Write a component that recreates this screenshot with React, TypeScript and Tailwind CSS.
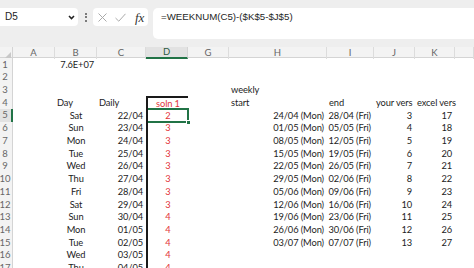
import React from "react";

const COLS =
  "grid grid-cols-[13px_42px_42px_49px_42px_41px_98px_47px_41px_40px_19px] h-[12.73px]";

const days = ["Sat","Sun","Mon","Tue","Wed","Thu","Fri","Sat","Sun","Mon","Tue","Wed","Thu"];
const dates = ["22/04","23/04","24/04","25/04","26/04","27/04","28/04","29/04","30/04","01/05","02/05","03/05","04/05"];
const soln = ["2","3","3","3","3","3","3","3","4","4","4","4","4"];
const weeks: [string, string, string, string][] = [
  ["24/04 (Mon)", "28/04 (Fri)", "3", "17"],
  ["01/05 (Mon)", "05/05 (Fri)", "4", "18"],
  ["08/05 (Mon)", "12/05 (Fri)", "5", "19"],
  ["15/05 (Mon)", "19/05 (Fri)", "6", "20"],
  ["22/05 (Mon)", "26/05 (Fri)", "7", "21"],
  ["29/05 (Mon)", "02/06 (Fri)", "8", "22"],
  ["05/06 (Mon)", "09/06 (Fri)", "9", "23"],
  ["12/06 (Mon)", "16/06 (Fri)", "10", "24"],
  ["19/06 (Mon)", "23/06 (Fri)", "11", "25"],
  ["26/06 (Mon)", "30/06 (Fri)", "12", "26"],
  ["03/07 (Mon)", "07/07 (Fri)", "13", "27"],
];

function L({ children }: { children?: React.ReactNode }) {
  return <div className="flex items-center pl-[2px] whitespace-nowrap overflow-visible">{children}</div>;
}
function R({ children }: { children?: React.ReactNode }) {
  return <div className="flex items-center justify-end pr-[3px] whitespace-nowrap">{children}</div>;
}
function C({ children }: { children?: React.ReactNode }) {
  return <div className="flex items-center justify-center whitespace-nowrap">{children}</div>;
}

function RowHead({ n, active }: { n: number; active?: boolean }) {
  return (
    <div
      className={
        "flex items-center overflow-hidden text-[#666] text-[9.5px] border-r " +
        (active ? "bg-[#e2e2e2] border-r-2 border-[#217346]" : "bg-[#f3f3f3] border-[#d4d4d4]")
      }
    >
      <div className="w-[12px] -ml-[1px] shrink-0 text-center">{n}</div>
    </div>
  );
}

function DCell({ n, children }: { n: number; children?: React.ReactNode }) {
  if (n < 4) return <div />;
  return (
    <div
      className={
        "relative flex items-center justify-center text-[#e3343a] border-l-2 border-[#1a1a1a] " +
        (n === 4 ? "border-t-2" : "")
      }
    >
      {children}
      {n === 5 && (
        <div className="absolute -top-[1px] -bottom-[1px] left-0 -right-[1px] border-2 border-l-0 border-[#217346]">
          <div className="absolute -right-[4px] -bottom-[4px] w-[5px] h-[5px] bg-[#217346] border border-white" />
        </div>
      )}
    </div>
  );
}

export default function App() {
  const headers = ["A", "B", "C", "D", "G", "H", "I", "J", "K", ""];
  return (
    <div className="w-[474px] h-[268px] overflow-hidden bg-white text-[#1c1c1c] font-['Lato',sans-serif] text-[9.3px] tracking-[-0.1px] leading-none">
      {/* Formula bar */}
      <div className="h-[47px] bg-[#eeeeee] flex items-start pt-[8px] font-['Liberation_Sans',sans-serif] tracking-normal">
        <div className="w-[78px] h-[18px] bg-white rounded-r-[4px] flex items-center justify-between pl-[5px] pr-[3px]">
          <span className="text-[10px] text-[#222]">D5</span>
          <svg width="7" height="5" viewBox="0 0 7 5">
            <path d="M1 1 L3.5 3.6 L6 1" fill="none" stroke="#222" strokeWidth="1.5" />
          </svg>
        </div>
        <div className="w-[15px] h-[18px] flex flex-col items-center justify-center gap-[1.5px]">
          <div className="w-[2px] h-[2px] bg-[#555] rounded-full" />
          <div className="w-[2px] h-[2px] bg-[#555] rounded-full" />
          <div className="w-[2px] h-[2px] bg-[#555] rounded-full" />
        </div>
        <div className="w-[55px] h-[18px] bg-white rounded-[4px] flex items-center pl-[5px]">
          <svg width="9" height="9" viewBox="0 0 9 9">
            <path d="M0.5 0.5 L8.5 8.5 M8.5 0.5 L0.5 8.5" stroke="#aaa" strokeWidth="1" />
          </svg>
          <svg width="11" height="9" viewBox="0 0 11 9" className="ml-[8px]">
            <path d="M0.5 5 L3.8 8.2 L10.5 0.8" fill="none" stroke="#aaa" strokeWidth="1" />
          </svg>
          <span className="ml-[9px] font-['Liberation_Serif',serif] italic text-[13px] text-[#333] leading-none">
            fx
          </span>
        </div>
        <div className="ml-[5px] flex-1 h-[31px] bg-white rounded-l-[5px] pl-[8px] pt-[4px] text-[9.7px] text-[#1e1e1e]">
          =WEEKNUM(C5)-($K$5-$J$5)
        </div>
      </div>

      {/* Column headers */}
      <div className="grid grid-cols-[13px_42px_42px_49px_42px_41px_98px_47px_41px_40px_19px] h-[11px] bg-[#f3f3f3] border-b border-[#d4d4d4] text-[#666] text-[9.5px] tracking-normal">
        <div className="flex items-end justify-end border-r border-[#d4d4d4] pr-[1px] pb-[1px]">
          <svg width="6" height="6" viewBox="0 0 6 6">
            <path d="M6 0 L6 6 L0 6 Z" fill="#c8c8c8" />
          </svg>
        </div>
        {headers.map((h, i) => (
          <div
            key={i}
            className={
              "flex items-center justify-center border-r " +
              (h === "D"
                ? "bg-[#e2e2e2] border-[#d4d4d4] border-b-2 border-b-[#217346] text-[#2d5a3f]"
                : "border-[#dcdcdc]")
            }
          >
            {h}
          </div>
        ))}
      </div>

      {/* Rows */}
      {Array.from({ length: 17 }, (_, idx) => {
        const n = idx + 1;
        const d = n >= 5 ? n - 5 : -1;
        const w = n >= 5 && n <= 15 ? weeks[n - 5] : null;
        return (
          <div key={n} className={COLS}>
            <RowHead n={n} active={n === 5} />
            <div />
            {n === 1 ? <R>7.6E+07</R> : n === 4 ? <L>Day</L> : d >= 0 ? <C>{days[d]}</C> : <div />}
            {n === 4 ? <L>Daily</L> : d >= 0 ? <R>{dates[d]}</R> : <div />}
            <DCell n={n}>{n === 4 ? "soln 1" : d >= 0 ? soln[d] : null}</DCell>
            <div />
            {n === 3 ? <L>weekly</L> : n === 4 ? <L>start</L> : w ? <R>{w[0]}</R> : <div />}
            {n === 4 ? <L>end</L> : w ? <R>{w[1]}</R> : <div />}
            {n === 4 ? <L>your vers</L> : w ? <R>{w[2]}</R> : <div />}
            {n === 4 ? <L>excel vers</L> : w ? <R>{w[3]}</R> : <div />}
            <div />
          </div>
        );
      })}
    </div>
  );
}
